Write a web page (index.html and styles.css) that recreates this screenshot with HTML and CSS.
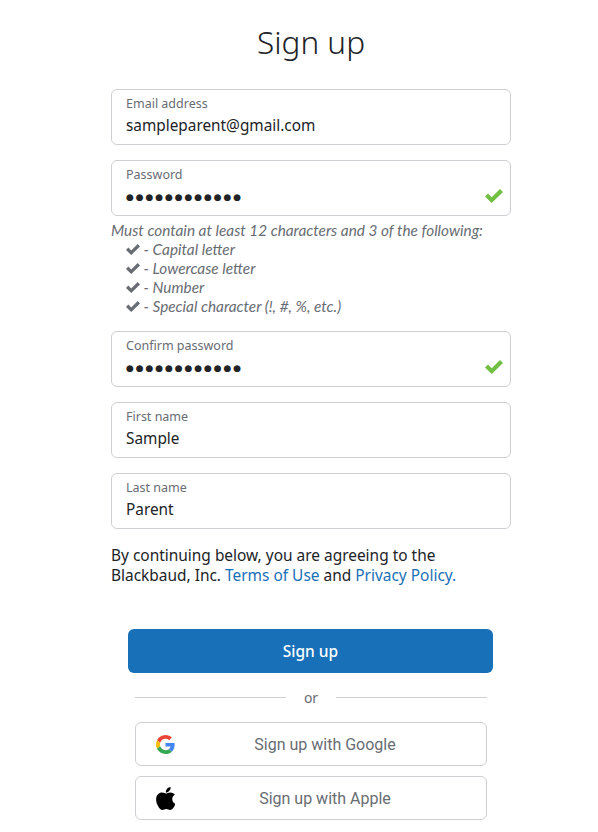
FILE: index.html
```html
<!DOCTYPE html>
<html lang="en">
<head>
    <meta charset="UTF-8">
    <meta name="viewport" content="width=device-width, initial-scale=1.0">
    <title>Sign up</title>
    <link rel="stylesheet" href="styles.css">
</head>
<body>

<div class="signup">
    <h1>Sign up</h1>

    <div class="field">
        <label>Email address</label>
        <div class="value">sampleparent@gmail.com</div>
    </div>

    <div class="field">
        <label>Password</label>
        <div class="value dots">●●●●●●●●●●●●</div>
        <svg class="valid" viewBox="0 0 18 14"><path d="M0 7.500 3 4.500 6.700 8.200 15 0 18 3 6.700 14Z"/></svg>
    </div>

    <div class="rules">
        <p>Must contain at least 12 characters and 3 of the following:</p>
        <ul>
            <li><svg viewBox="0 0 18 14"><path d="M0 7.500 3 4.500 6.700 8.200 15 0 18 3 6.700 14Z"/></svg> - Capital letter</li>
            <li><svg viewBox="0 0 18 14"><path d="M0 7.500 3 4.500 6.700 8.200 15 0 18 3 6.700 14Z"/></svg> - Lowercase letter</li>
            <li><svg viewBox="0 0 18 14"><path d="M0 7.500 3 4.500 6.700 8.200 15 0 18 3 6.700 14Z"/></svg> - Number</li>
            <li><svg viewBox="0 0 18 14"><path d="M0 7.500 3 4.500 6.700 8.200 15 0 18 3 6.700 14Z"/></svg> - Special character (!, #, %, etc.)</li>
        </ul>
    </div>

    <div class="field">
        <label>Confirm password</label>
        <div class="value dots">●●●●●●●●●●●●</div>
        <svg class="valid" viewBox="0 0 18 14"><path d="M0 7.500 3 4.500 6.700 8.200 15 0 18 3 6.700 14Z"/></svg>
    </div>

    <div class="field">
        <label>First name</label>
        <div class="value">Sample</div>
    </div>

    <div class="field">
        <label>Last name</label>
        <div class="value">Parent</div>
    </div>

    <p class="terms">By continuing below, you are agreeing to the Blackbaud, Inc. <a href="#">Terms of Use</a> and <a href="#">Privacy Policy.</a></p>

    <button class="primary">Sign up</button>

    <div class="divider"><span>or</span></div>

    <button class="social">
        <svg viewBox="0 0 48 48">
            <path fill="#EA4335" d="M24 9.500c3.500 0 6.700 1.200 9.200 3.600l6.900-6.900C35.900 2.400 30.500 0 24 0 14.600 0 6.500 5.400 2.600 13.200l8 6.200C12.500 13.700 17.800 9.500 24 9.500z"/>
            <path fill="#4285F4" d="M47 24.500c0-1.600-.1-3.100-.4-4.500H24v9h12.900c-.6 3-2.200 5.400-4.700 7.100l7.700 6C44.400 38.400 47 32 47 24.500z"/>
            <path fill="#FBBC05" d="M10.600 28.600c-.5-1.400-.8-3-.8-4.600s.3-3.200.8-4.600l-8-6.200C.9 16.500 0 20.100 0 24s.9 7.500 2.600 10.800l8-6.200z"/>
            <path fill="#34A853" d="M24 48c6.500 0 11.900-2.100 15.900-5.800l-7.700-6c-2.100 1.400-4.900 2.300-8.200 2.300-6.200 0-11.500-4.200-13.400-9.900l-8 6.200C6.500 42.600 14.600 48 24 48z"/>
        </svg>
        <span>Sign up with Google</span>
    </button>

    <button class="social">
        <svg class="apple" viewBox="4 32 365 448"><path d="M318.700 268.700c-.2-36.700 16.400-64.400 50-84.800-18.800-26.900-47.200-41.700-84.700-44.600-35.500-2.800-74.300 20.700-88.500 20.700-15 0-49.400-19.700-76.400-19.700C63.300 141.200 4 184.800 4 273.500q0 39.300 14.400 81.200c12.800 36.700 59 126.700 107.200 125.200 25.200-.6 43-17.900 75.800-17.900 31.800 0 48.300 17.900 76.400 17.900 48.600-.7 90.400-82.500 102.600-119.300-65.200-30.700-61.700-90-61.700-91.900zM262.100 104.500c27.300-32.400 24.800-61.900 24-72.500-24.100 1.400-52 16.400-67.900 34.900-17.500 19.800-27.800 44.300-25.600 71.900 26.100 2 49.900-11.400 69.500-34.300z"/></svg>
        <span>Sign up with Apple</span>
    </button>
</div>

</body>
</html>
```

FILE: styles.css
```css
body {
    font-family: "Noto Sans", "Open Sans", sans-serif;
    background-color: #ffffff;
    color: #212327;
    margin: 0;
}
.signup {
    width: 400px;
    margin-left: 111px;
}
.signup h1 {
    font-size: 31.500px;
    font-weight: 300;
    line-height: 44px;
    text-align: center;
    margin: 0;
    padding: 20px 0 25px;
}
.field {
    position: relative;
    box-sizing: border-box;
    height: 56px;
    margin-bottom: 15px;
    padding: 6px 14px 0;
    border: 1px solid #cdcfd2;
    border-radius: 6px;
}
.field label {
    display: block;
    font-size: 12.500px;
    line-height: 16px;
    color: #686c73;
}
.field .value {
    font-size: 15.350px;
    line-height: 24px;
    margin-top: 1px;
}
.field .dots {
    font-family: "DejaVu Sans", sans-serif;
    font-size: 9px;
    letter-spacing: 1.900px;
    margin-top: 2px;
    color: #212327;
}
.field .valid {
    position: absolute;
    right: 7px;
    bottom: 12px;
    width: 18px;
    height: 14px;
    fill: #71bf43;
}
.rules {
    margin: -10px 0 15px;
    font-family: "Lato", sans-serif;
    font-size: 15.350px;
    font-style: italic;
    line-height: 19px;
    color: #686c73;
}
.rules p {
    margin: 0;
}
.rules ul {
    list-style: none;
    margin: 0;
    padding: 0 0 0 15px;
}
.rules svg {
    width: 14px;
    height: 11px;
    fill: #686c73;
}
.terms {
    margin: 16px 0 44px;
    font-size: 15.450px;
    line-height: 20px;
}
.terms a {
    color: #1870b8;
    text-decoration: none;
}
button {
    display: block;
    font-family: inherit;
    cursor: pointer;
}
.primary {
    width: 365px;
    height: 44px;
    margin-left: 17px;
    background-color: #1870b8;
    color: #ffffff;
    border: none;
    border-radius: 6px;
    font-size: 15.500px;
    font-weight: 500;
}
.divider {
    display: flex;
    align-items: center;
    gap: 18px;
    width: 352px;
    height: 20px;
    margin: 14px 0 15px 24px;
    font-size: 14px;
    color: #686c73;
}
.divider::before,
.divider::after {
    content: "";
    flex: 1;
    border-top: 1px solid #cdcfd2;
}
.social {
    display: flex;
    align-items: center;
    width: 352px;
    height: 44px;
    margin: 0 0 10px 24px;
    padding: 0 11px 0 20px;
    background-color: #ffffff;
    border: 1px solid #cdcfd2;
    border-radius: 6px;
    font-family: Roboto, sans-serif;
    font-size: 16px;
    color: #686c73;
}
.social svg {
    width: 19px;
    height: 19px;
    flex-shrink: 0;
}
.social .apple {
    height: 23px;
}
.social span {
    flex: 1;
    text-align: center;
}
```
